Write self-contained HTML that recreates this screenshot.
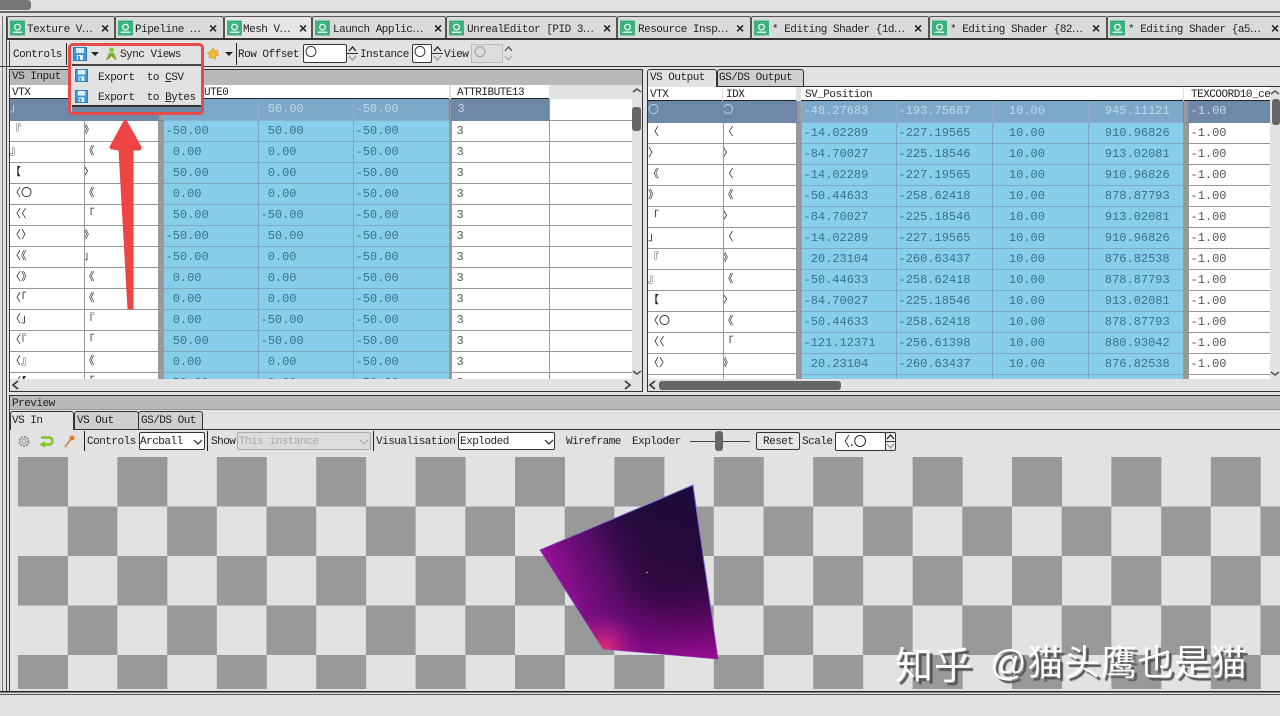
<!DOCTYPE html>
<html><head><meta charset="utf-8"><style>
*{box-sizing:border-box}
html,body{margin:0;padding:0;width:1280px;height:716px;overflow:hidden;background:#e2e2e2}
body{position:relative;font:11px/12px "Liberation Mono","Noto Sans CJK SC",monospace;letter-spacing:-.5px;color:#222}
.a{position:absolute;white-space:pre}
.tab{position:absolute;top:16px;height:23px;background:#dadada;border:1px solid #555;border-bottom:0;border-radius:2px 2px 0 0}
.tab.on{background:#e6e6e6}
.tab span{position:absolute;top:5px;white-space:pre}
.tab i{font:normal 10px/12px "Noto Sans CJK TC",sans-serif;letter-spacing:0}
.tab svg{position:absolute;left:2px;top:3px}
.tab b{position:absolute;top:4px;font:bold 14px/14px "Liberation Sans",sans-serif;letter-spacing:0}
table{border-collapse:collapse;table-layout:fixed;font:12px/20px "Liberation Mono","Noto Sans CJK TC",monospace;letter-spacing:0;white-space:pre;position:absolute;left:0;top:0}
td{height:21px;padding:0;border-bottom:1px solid #999;overflow:hidden;background:#fff;font-size:11px;color:#222}
td+td{border-left:1px solid #999;text-indent:-1px}
td.g{background:#999;border-color:#999}
td.n{background:#87ceeb;color:#3a7190;font-size:12px;border-color:#7fa9bf;padding-left:2px;text-indent:0}
td.w{font-size:12px;color:#555;text-indent:0;padding-left:5px}
tr.s td{background:#7088a8;color:#c5d5e5;border-color:#7088a8}
tr.s td.n{background:#7ea8c8;color:#bcd9ee;border-color:#8fb0cc}
tr.s td.g{background:#999}
.box{position:absolute;background:#fff;border:1px solid #333;border-radius:2px}
.sep{position:absolute;width:1px;background:#222}
.hd{position:absolute;background:#fff;border-bottom:1px solid #222}
</style></head><body>
<svg width="0" height="0" style="position:absolute"><defs>
<symbol id="ti" viewBox="0 0 16 16"><rect width="16" height="16" fill="#3cb27c"/><circle cx="8" cy="7" r="3" fill="none" stroke="#fff" stroke-width="1.3"/><path d="M3 12.5h10" stroke="#fff" stroke-width="1.4"/></symbol>
<symbol id="sv" viewBox="0 0 14 14"><rect x=".5" y=".5" width="13" height="13" fill="#3f97dc" stroke="#2f7ab8"/><rect x="3" y="1" width="8" height="5" fill="#d8ecfa"/><rect x="4" y="8" width="6" height="5" fill="#eaf4fb"/><rect x="5" y="9" width="2" height="4" fill="#3f97dc"/></symbol>
<symbol id="spin" viewBox="0 0 11 19"><path d="M2 7l3.500-4 3.500 4" fill="none" stroke="#222" stroke-width="1.300"/><path d="M0 9.500h11" stroke="#333"/><path d="M2 12l3.500 4 3.500-4" fill="none" stroke="#999" stroke-width="1.300"/></symbol>
<symbol id="spind" viewBox="0 0 11 19"><path d="M2 7l3.500-4 3.500 4" fill="none" stroke="#555" stroke-width="1.300"/><path d="M2 12l3.500 4 3.500-4" fill="none" stroke="#aaa" stroke-width="1.300"/></symbol>
<pattern id="ck" x="18" y="457" width="99.4" height="99" patternUnits="userSpaceOnUse"><rect x="0" y="0" width="50" height="49.5" fill="#999"/><rect x="49.7" y="49.5" width="50" height="49.5" fill="#999"/></pattern>
<linearGradient id="g1" gradientUnits="userSpaceOnUse" x1="545" y1="570" x2="640" y2="530"><stop offset="0" stop-color="#a0109f"/><stop offset=".55" stop-color="#70107f" stop-opacity=".6"/><stop offset="1" stop-color="#400a50" stop-opacity="0"/></linearGradient>
<linearGradient id="g2" gradientUnits="userSpaceOnUse" x1="662" y1="662" x2="652" y2="585"><stop offset="0" stop-color="#980a92"/><stop offset="1" stop-color="#600a70" stop-opacity="0"/></linearGradient>
<radialGradient id="g3" gradientUnits="userSpaceOnUse" cx="603" cy="650" r="38"><stop offset="0" stop-color="#e8306a"/><stop offset="1" stop-color="#b0189a" stop-opacity="0"/></radialGradient>
<linearGradient id="g0" gradientUnits="userSpaceOnUse" x1="693" y1="485" x2="650" y2="620"><stop offset="0" stop-color="#1a0a3a"/><stop offset="1" stop-color="#34083f"/></linearGradient>
</defs></svg>

<!-- top strip -->
<div class="a" style="left:0;top:0;width:31px;height:10px;background:#777;border-radius:0 3px 3px 0"></div>
<div class="a" style="left:0;top:11px;width:1280px;height:2px;background:#666"></div>
<div class="a" style="left:2px;top:16px;width:1px;height:675px;background:#777"></div>
<div class="a" style="left:6px;top:16px;width:1px;height:675px;background:#444"></div>

<!-- tabs -->
<div class="tab" style="left:7px;width:108px"><svg width="15" height="16"><use href="#ti"/></svg><span style="left:19px">Texture V<i>…</i></span><b style="left:93px">×</b></div>
<div class="tab" style="left:115px;width:109px"><svg width="15" height="16"><use href="#ti"/></svg><span style="left:19px">Pipeline <i>…</i></span><b style="left:93px">×</b></div>
<div class="tab on" style="left:224px;width:88px"><svg width="15" height="16"><use href="#ti"/></svg><span style="left:18px">Mesh V<i>…</i></span><b style="left:74px">×</b></div>
<div class="tab" style="left:312px;width:134px"><svg width="15" height="16"><use href="#ti"/></svg><span style="left:20px">Launch Applic<i>…</i></span><b style="left:121px">×</b></div>
<div class="tab" style="left:446px;width:171px"><svg width="15" height="16"><use href="#ti"/></svg><span style="left:20px">UnrealEditor [PID 3<i>…</i></span><b style="left:156px">×</b></div>
<div class="tab" style="left:617px;width:134px"><svg width="15" height="16"><use href="#ti"/></svg><span style="left:20px">Resource Insp<i>…</i></span><b style="left:118px">×</b></div>
<div class="tab" style="left:751px;width:178px"><svg width="15" height="16"><use href="#ti"/></svg><span style="left:20px">* Editing Shader {1d<i>…</i></span><b style="left:162px">×</b></div>
<div class="tab" style="left:929px;width:178px"><svg width="15" height="16"><use href="#ti"/></svg><span style="left:20px">* Editing Shader {82<i>…</i></span><b style="left:162px">×</b></div>
<div class="tab" style="left:1107px;width:175px"><svg width="15" height="16"><use href="#ti"/></svg><span style="left:20px">* Editing Shader {a5<i>…</i></span><b style="left:163px">×</b></div>
<div class="a" style="left:7px;top:38px;width:1273px;height:2px;background:#333"></div>

<!-- toolbar -->
<div class="a" style="left:9px;top:41px;width:1271px;height:25px;border-left:1px solid #444"></div>
<div class="a" style="left:13px;top:49px">Controls</div>
<div class="sep" style="left:66px;top:43px;height:22px"></div>
<div class="a" style="left:206px;top:47px;width:14px;height:14px"><svg width="14" height="14" viewBox="0 0 14 14"><path d="M7 1l1.500 2.500L12 3l-.5 3.500L13 8l-3 1-1 3.500-2.500-2L3 11 3.500 7.500 1 6l3.500-1.500z" fill="#f0b93a" stroke="#d69a20" stroke-width=".6"/></svg></div>
<div class="a" style="left:225px;top:52px;width:0;height:0;border:4px solid transparent;border-top:4px solid #222"></div>
<div class="sep" style="left:236px;top:43px;height:22px"></div>
<div class="a" style="left:238px;top:49px">Row Offset</div>
<div class="box" style="left:303px;top:44px;width:44px;height:19px"></div><div class="a" style="left:305px;top:47px;font-size:12px;letter-spacing:0">〇</div>
<svg class="a" style="left:347px;top:44px" width="11" height="19"><use href="#spin"/></svg>
<div class="a" style="left:360px;top:49px">Instance</div>
<div class="box" style="left:412px;top:44px;width:20px;height:19px"></div><div class="a" style="left:414px;top:47px;font-size:12px;letter-spacing:0">〇</div>
<svg class="a" style="left:432px;top:44px" width="11" height="19"><use href="#spin"/></svg>
<div class="a" style="left:444px;top:49px">View</div>
<div class="a" style="left:471px;top:44px;width:32px;height:19px;background:#dcdcdc;border:1px solid #bbb"></div><div class="a" style="left:474px;top:47px;font-size:12px;letter-spacing:0;color:#999">〇</div>
<svg class="a" style="left:503px;top:44px" width="11" height="19"><use href="#spind"/></svg>
<div class="a" style="left:0;top:66px;width:1280px;height:1px;background:#333"></div>

<!-- left panel -->
<div class="a" style="left:9px;top:69px;width:634px;height:323px;border:1px solid #333;background:#e2e2e2"></div>
<div class="a" style="left:10px;top:70px;width:632px;height:15px;background:#b9b9b9"></div>
<div class="a" style="left:12px;top:71px;">VS Input</div>
<div class="hd" style="left:10px;top:85px;width:74px;height:14px"></div><div class="a" style="left:12px;top:87px">VTX</div>
<div class="hd" style="left:85px;top:85px;width:364px;height:14px"></div><div class="a" style="left:204px;top:87px">UTE0</div>
<div class="hd" style="left:451px;top:85px;width:98px;height:14px"></div><div class="a" style="left:457px;top:87px">ATTRIBUTE13</div>
<div class="a" style="left:10px;top:99px;width:622px;height:280px;overflow:hidden">
<table style="width:622px"><colgroup><col style="width:74px"><col style="width:74px"><col style="width:5px"><col style="width:95px"><col style="width:95px"><col style="width:96px"><col style="width:2px"><col style="width:98px"><col style="width:83px"></colgroup>
<tr class="s"><td>」</td><td>〈</td><td class="g"></td><td class="n"> 0.00</td><td class="n"> 50.00</td><td class="n">-50.00</td><td class="g"></td><td style="padding-left:6px;font-size:12px;text-indent:0">3</td><td style="background:#fff;border-color:#999"></td></tr>
<tr><td>『</td><td>》</td><td class="g"></td><td class="n">-50.00</td><td class="n"> 50.00</td><td class="n">-50.00</td><td class="g"></td><td class="w">3</td><td></td></tr>
<tr><td>』</td><td>《</td><td class="g"></td><td class="n"> 0.00</td><td class="n"> 0.00</td><td class="n">-50.00</td><td class="g"></td><td class="w">3</td><td></td></tr>
<tr><td>【</td><td>〉</td><td class="g"></td><td class="n"> 50.00</td><td class="n"> 0.00</td><td class="n">-50.00</td><td class="g"></td><td class="w">3</td><td></td></tr>
<tr><td>〈〇</td><td>《</td><td class="g"></td><td class="n"> 0.00</td><td class="n"> 0.00</td><td class="n">-50.00</td><td class="g"></td><td class="w">3</td><td></td></tr>
<tr><td>〈〈</td><td>「</td><td class="g"></td><td class="n"> 50.00</td><td class="n">-50.00</td><td class="n">-50.00</td><td class="g"></td><td class="w">3</td><td></td></tr>
<tr><td>〈〉</td><td>》</td><td class="g"></td><td class="n">-50.00</td><td class="n"> 50.00</td><td class="n">-50.00</td><td class="g"></td><td class="w">3</td><td></td></tr>
<tr><td>〈《</td><td>」</td><td class="g"></td><td class="n">-50.00</td><td class="n"> 0.00</td><td class="n">-50.00</td><td class="g"></td><td class="w">3</td><td></td></tr>
<tr><td>〈》</td><td>《</td><td class="g"></td><td class="n"> 0.00</td><td class="n"> 0.00</td><td class="n">-50.00</td><td class="g"></td><td class="w">3</td><td></td></tr>
<tr><td>〈「</td><td>《</td><td class="g"></td><td class="n"> 0.00</td><td class="n"> 0.00</td><td class="n">-50.00</td><td class="g"></td><td class="w">3</td><td></td></tr>
<tr><td>〈」</td><td>『</td><td class="g"></td><td class="n"> 0.00</td><td class="n">-50.00</td><td class="n">-50.00</td><td class="g"></td><td class="w">3</td><td></td></tr>
<tr><td>〈『</td><td>「</td><td class="g"></td><td class="n"> 50.00</td><td class="n">-50.00</td><td class="n">-50.00</td><td class="g"></td><td class="w">3</td><td></td></tr>
<tr><td>〈』</td><td>《</td><td class="g"></td><td class="n"> 0.00</td><td class="n"> 0.00</td><td class="n">-50.00</td><td class="g"></td><td class="w">3</td><td></td></tr>
<tr><td>〈【</td><td>「</td><td class="g"></td><td class="n"> 50.00</td><td class="n"> 0.00</td><td class="n">-50.00</td><td class="g"></td><td class="w">3</td><td></td></tr>
</table></div>
<div class="a" style="left:632px;top:99px;width:10px;height:280px;background:#e2e2e2"></div>
<div class="a" style="left:632px;top:107px;width:9px;height:24px;background:#666;border-radius:3px"></div>
<svg class="a" style="left:0;top:0" width="1280" height="400" viewBox="0 0 1280 400" fill="none" stroke="#555" stroke-width="1.600">
<path d="M633 92l4-3 4 3M633 371l4 3 4-3"/>
<path d="M18 381l-5 4 5 4M625 381l5 4-5 4" stroke="#333"/>
</svg>

<!-- right panel -->
<div class="a" style="left:647px;top:86px;width:633px;height:306px;border:1px solid #333;border-right:0;background:#e2e2e2"></div>
<div class="a" style="left:647px;top:69px;width:70px;height:18px;background:#e2e2e2;border:1px solid #333;border-bottom:0;border-radius:3px 3px 0 0"></div>
<div class="a" style="left:717px;top:69px;width:87px;height:17px;background:#cfcfcf;border:1px solid #333;border-bottom:0;border-radius:3px 3px 0 0"></div>
<div class="a" style="left:650px;top:72px">VS Output</div><div class="a" style="left:719px;top:72px">GS/DS Output</div>
<div class="hd" style="left:648px;top:87px;width:74px;height:14px"></div><div class="a" style="left:650px;top:89px">VTX</div>
<div class="hd" style="left:723px;top:87px;width:73px;height:14px"></div><div class="a" style="left:726px;top:89px">IDX</div>
<div class="hd" style="left:801px;top:87px;width:382px;height:14px"></div><div class="a" style="left:805px;top:89px">SV_Position</div>
<div class="hd" style="left:1184px;top:87px;width:86px;height:14px"></div><div class="a" style="left:1191px;top:89px">TEXCOORD10_ce</div>
<div class="a" style="left:648px;top:101px;width:622px;height:278px;overflow:hidden">
<table style="width:622px"><colgroup><col style="width:75px"><col style="width:73px"><col style="width:5px"><col style="width:95px"><col style="width:96px"><col style="width:96px"><col style="width:95px"><col style="width:5px"><col style="width:82px"></colgroup>
<tr class="s"><td>〇</td><td>〇</td><td class="g"></td><td class="n">-48.27683</td><td class="n">-193.75687</td><td class="n">  10.00</td><td class="n">  945.11121</td><td class="g"></td><td style="padding-left:2px;font-size:12px;text-indent:0">-1.00</td></tr>
<tr><td>〈</td><td>〈</td><td class="g"></td><td class="n">-14.02289</td><td class="n">-227.19565</td><td class="n">  10.00</td><td class="n">  910.96826</td><td class="g"></td><td class="w" style="padding-left:2px">-1.00</td></tr>
<tr><td>〉</td><td>〉</td><td class="g"></td><td class="n">-84.70027</td><td class="n">-225.18546</td><td class="n">  10.00</td><td class="n">  913.02081</td><td class="g"></td><td class="w" style="padding-left:2px">-1.00</td></tr>
<tr><td>《</td><td>〈</td><td class="g"></td><td class="n">-14.02289</td><td class="n">-227.19565</td><td class="n">  10.00</td><td class="n">  910.96826</td><td class="g"></td><td class="w" style="padding-left:2px">-1.00</td></tr>
<tr><td>》</td><td>《</td><td class="g"></td><td class="n">-50.44633</td><td class="n">-258.62418</td><td class="n">  10.00</td><td class="n">  878.87793</td><td class="g"></td><td class="w" style="padding-left:2px">-1.00</td></tr>
<tr><td>「</td><td>〉</td><td class="g"></td><td class="n">-84.70027</td><td class="n">-225.18546</td><td class="n">  10.00</td><td class="n">  913.02081</td><td class="g"></td><td class="w" style="padding-left:2px">-1.00</td></tr>
<tr><td>」</td><td>〈</td><td class="g"></td><td class="n">-14.02289</td><td class="n">-227.19565</td><td class="n">  10.00</td><td class="n">  910.96826</td><td class="g"></td><td class="w" style="padding-left:2px">-1.00</td></tr>
<tr><td>『</td><td>》</td><td class="g"></td><td class="n"> 20.23104</td><td class="n">-260.63437</td><td class="n">  10.00</td><td class="n">  876.82538</td><td class="g"></td><td class="w" style="padding-left:2px">-1.00</td></tr>
<tr><td>』</td><td>《</td><td class="g"></td><td class="n">-50.44633</td><td class="n">-258.62418</td><td class="n">  10.00</td><td class="n">  878.87793</td><td class="g"></td><td class="w" style="padding-left:2px">-1.00</td></tr>
<tr><td>【</td><td>〉</td><td class="g"></td><td class="n">-84.70027</td><td class="n">-225.18546</td><td class="n">  10.00</td><td class="n">  913.02081</td><td class="g"></td><td class="w" style="padding-left:2px">-1.00</td></tr>
<tr><td>〈〇</td><td>《</td><td class="g"></td><td class="n">-50.44633</td><td class="n">-258.62418</td><td class="n">  10.00</td><td class="n">  878.87793</td><td class="g"></td><td class="w" style="padding-left:2px">-1.00</td></tr>
<tr><td>〈〈</td><td>「</td><td class="g"></td><td class="n">-121.12371</td><td class="n">-256.61398</td><td class="n">  10.00</td><td class="n">  880.93042</td><td class="g"></td><td class="w" style="padding-left:2px">-1.00</td></tr>
<tr><td>〈〉</td><td>》</td><td class="g"></td><td class="n"> 20.23104</td><td class="n">-260.63437</td><td class="n">  10.00</td><td class="n">  876.82538</td><td class="g"></td><td class="w" style="padding-left:2px">-1.00</td></tr>
<tr><td></td><td></td><td class="g"></td><td class="n"></td><td class="n"></td><td class="n"></td><td class="n"></td><td class="g"></td><td></td></tr>
</table></div>
<div class="a" style="left:1272px;top:99px;width:8px;height:26px;background:#666;border-radius:3px"></div>
<div class="a" style="left:659px;top:381px;width:182px;height:9px;background:#666;border-radius:3px"></div>
<svg class="a" style="left:0;top:0" width="1280" height="400" viewBox="0 0 1280 400" fill="none" stroke="#555" stroke-width="1.600">
<path d="M1271 94l4-3 4 3M1271 372l4 3 4-3"/><path d="M655 381l-5 4 5 4" stroke="#333"/>
</svg>

<!-- preview -->
<div class="a" style="left:9px;top:395px;width:1271px;height:297px;border:1px solid #333;border-right:0;background:#e2e2e2"></div>
<div class="a" style="left:10px;top:396px;width:1270px;height:14px;background:#b9b9b9;border-bottom:1px solid #999"></div>
<div class="a" style="left:12px;top:398px">Preview</div>
<div class="a" style="left:10px;top:429px;width:1270px;height:1px;background:#333"></div>
<div class="a" style="left:10px;top:411px;width:64px;height:19px;background:#e2e2e2;border:1px solid #333;border-bottom:0;border-radius:3px 3px 0 0"></div>
<div class="a" style="left:74px;top:411px;width:65px;height:18px;background:#cfcfcf;border:1px solid #333;border-bottom:0;border-radius:3px 3px 0 0"></div>
<div class="a" style="left:138px;top:411px;width:65px;height:18px;background:#cfcfcf;border:1px solid #333;border-bottom:0;border-radius:3px 3px 0 0"></div>
<div class="a" style="left:12px;top:415px">VS In</div><div class="a" style="left:77px;top:415px">VS Out</div><div class="a" style="left:141px;top:415px">GS/DS Out</div>

<svg class="a" style="left:17px;top:434px" width="60" height="15" viewBox="0 0 60 15">
<circle cx="7" cy="7.500" r="4.500" fill="none" stroke="#8a8a8a" stroke-width="2" stroke-dasharray="2 1"/><circle cx="7" cy="7.500" r="2" fill="none" stroke="#999"/>
<path d="M24 3.500h8a3 3 0 0 1 0 7h-8" fill="none" stroke="#7cc520" stroke-width="2.500"/><path d="M28 8l-4 2.500 4 2.500" fill="none" stroke="#7cc520" stroke-width="1.500"/>
<path d="M48 13l6-8" stroke="#c49a6a" stroke-width="2"/><circle cx="55" cy="4" r="2.500" fill="#e8742a"/></svg>
<div class="sep" style="left:84px;top:431px;height:20px"></div>
<div class="a" style="left:87px;top:436px">Controls</div>
<div class="box" style="left:139px;top:432px;width:66px;height:18px"></div><div class="a" style="left:140px;top:436px">Arcball</div>
<svg class="a" style="left:193px;top:439px" width="10" height="6"><path d="M1 1l4 4 4-4" fill="none" stroke="#222" stroke-width="1.200"/></svg>
<div class="sep" style="left:207px;top:431px;height:20px"></div>
<div class="a" style="left:211px;top:436px">Show</div>
<div class="a" style="left:237px;top:432px;width:134px;height:18px;background:#dcdcdc;border:1px solid #aaa;border-radius:2px"></div><div class="a" style="left:239px;top:436px;color:#aaa">This instance</div>
<svg class="a" style="left:359px;top:439px" width="10" height="6"><path d="M1 1l4 4 4-4" fill="none" stroke="#aaa" stroke-width="1.200"/></svg>
<div class="sep" style="left:373px;top:431px;height:20px"></div>
<div class="a" style="left:376px;top:436px">Visualisation</div>
<div class="box" style="left:458px;top:432px;width:97px;height:18px"></div><div class="a" style="left:460px;top:436px">Exploded</div>
<svg class="a" style="left:544px;top:439px" width="10" height="6"><path d="M1 1l4 4 4-4" fill="none" stroke="#222" stroke-width="1.200"/></svg>
<div class="a" style="left:566px;top:436px">Wireframe</div>
<div class="a" style="left:632px;top:436px">Exploder</div>
<div class="a" style="left:690px;top:441px;width:60px;height:1px;background:#444"></div>
<div class="a" style="left:715px;top:431px;width:8px;height:20px;background:#666;border-radius:3px"></div>
<div class="a" style="left:756px;top:432px;width:44px;height:18px;background:#e6e6e6;border:1px solid #333;border-radius:2px;padding:3px 0 0 6px">Reset</div>
<div class="a" style="left:802px;top:436px">Scale</div>
<div class="box" style="left:835px;top:432px;width:51px;height:19px"></div><div class="a" style="left:837px;top:434px;font:13px/14px 'Noto Sans CJK TC',sans-serif;letter-spacing:0">〈.〇</div>
<div class="a" style="left:885px;top:432px;width:11px;height:19px;background:#eee;border:1px solid #333;border-radius:2px"></div>
<svg class="a" style="left:885px;top:432px" width="11" height="19"><use href="#spin"/></svg>

<!-- checker + mesh -->
<svg class="a" style="left:0;top:0" width="1280" height="716" viewBox="0 0 1280 716">
<rect x="18" y="457" width="1262" height="232" fill="url(#ck)"/>
<rect x="0" y="691" width="1280" height="1.500" fill="#222"/><rect x="0" y="694" width="1280" height="1" fill="#555"/>
<polygon points="540,550 693,485 718,659 603,649" fill="url(#g0)" stroke="#8078d8" stroke-width="1"/>
<polygon points="540,550 693,485 718,659 603,649" fill="url(#g1)"/>
<polygon points="540,550 693,485 718,659 603,649" fill="url(#g2)"/>
<polygon points="540,550 693,485 718,659 603,649" fill="url(#g3)"/>
<circle cx="647" cy="572.500" r=".8" fill="#ccc"/>
</svg>

<!-- arrow -->
<svg class="a" style="left:0;top:0" width="1280" height="716" viewBox="0 0 1280 716">
<path d="M124 121L110 147q0 2 3 2L119 150 128 309h5L133 150h6q2 0 2-3L126 120z" fill="#ef4444" stroke="#ef4444" stroke-width="1" stroke-linejoin="round"/>
</svg>

<!-- popup -->
<div class="a" style="left:68px;top:43px;width:136px;height:72px;background:#e2e2e2;border:3.500px solid #e54b4b;border-radius:5px"></div>
<div class="a" style="left:72px;top:64px;width:129px;height:1.500px;background:#444"></div>
<div class="a" style="left:72px;top:105px;width:129px;height:2px;background:#333"></div>
<div class="a" style="left:72px;top:107px;width:129px;height:5px;background:#7088a8"></div>
<svg class="a" style="left:73px;top:47px" width="14" height="14"><use href="#sv"/></svg>
<div class="a" style="left:91px;top:52px;width:0;height:0;border:4px solid transparent;border-top:4px solid #222"></div>
<svg class="a" style="left:105px;top:47px" width="13" height="14" viewBox="0 0 13 14"><circle cx="6.500" cy="3" r="2.500" fill="#8cc63f"/><path d="M1 13l3-7h5l3 7-3-1-2.500-3L4 12z" fill="#7ab030"/></svg>
<div class="a" style="left:120px;top:49px">Sync Views</div>
<svg class="a" style="left:75px;top:69px" width="13" height="13"><use href="#sv"/></svg>
<svg class="a" style="left:75px;top:90px" width="13" height="13"><use href="#sv"/></svg>
<div class="a" style="left:98px;top:72px">Export  to <u>C</u>SV</div>
<div class="a" style="left:98px;top:92px">Export  to <u>B</u>ytes</div>

<!-- watermark -->
<div class="a" style="left:895px;top:640px;font:38px/46px 'Noto Sans CJK SC',sans-serif;letter-spacing:1px;color:#fff;text-shadow:3px 3px 1px #555">知乎</div>
<div class="a" style="left:990px;top:640px;font:36px/46px 'Liberation Sans','Noto Sans CJK SC',sans-serif;letter-spacing:.7px;color:#fff;text-shadow:3px 3px 1px #555">@猫头鹰也是猫</div>
</body></html>
